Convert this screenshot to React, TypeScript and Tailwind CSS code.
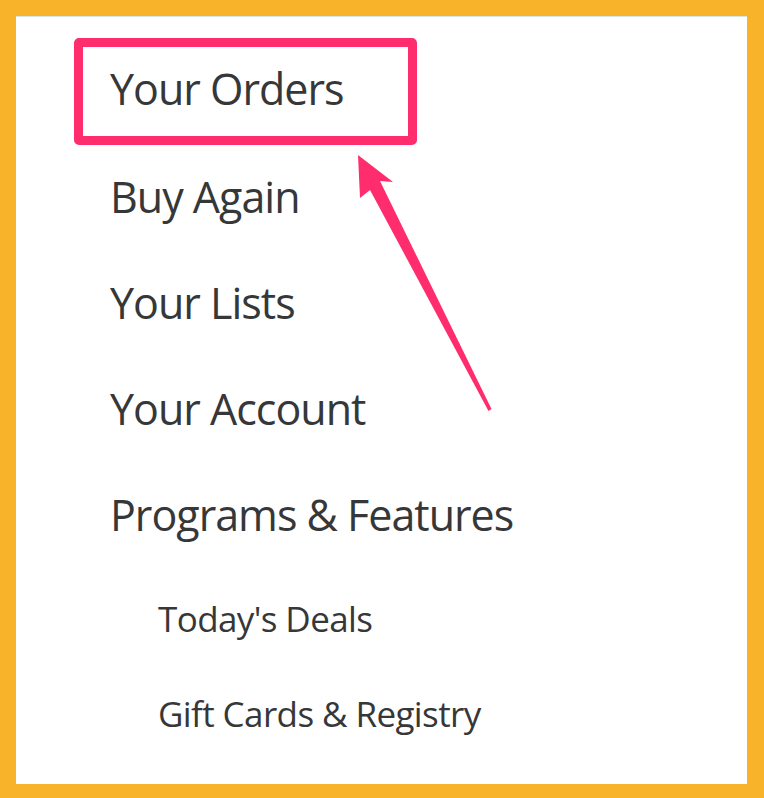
import React from "react";

const mainItems = ["Buy Again", "Your Lists", "Your Account", "Programs & Features"];
const subItems = ["Today's Deals", "Gift Cards & Registry"];

function Arrow() {
  return (
    <svg
      className="absolute left-0 top-0 pointer-events-none"
      width={764}
      height={798}
      viewBox="0 0 764 798"
    >
      <polygon
        points="358,155 393,182 380,181 491.5,409 488.5,411 370,190 360,198"
        fill="#FF2D6E"
        strokeLinejoin="round"
      />
    </svg>
  );
}

export default function App() {
  return (
    <div
      className="relative w-[764px] h-[798px] bg-[#F8B32B] pt-4 pl-4 pr-[17px] pb-[14px]"
      style={{ fontFamily: '"Open Sans", "Noto Sans", sans-serif' }}
    >
      <div className="h-full bg-white border-t border-[#d6e6e2] pt-[21px] text-[#363738]">
        <div className="ml-[58px] w-[343px] h-[107px] border-[9px] border-[#FF2D6E] rounded-[5px] pl-[27px] text-[43px] tracking-[-1px] leading-[83px]">
          Your Orders
        </div>
        {mainItems.map((item) => (
          <div key={item} className="h-[106px] pl-[94px] pt-[2px] text-[43px] tracking-[-1px] leading-[100px]">
            {item}
          </div>
        ))}
        {subItems.map((item) => (
          <div key={item} className="h-[95px] pt-[26px] pl-[142px] text-[35px] tracking-[-0.6px] leading-[48px]">
            {item}
          </div>
        ))}
      </div>
      <Arrow />
    </div>
  );
}
